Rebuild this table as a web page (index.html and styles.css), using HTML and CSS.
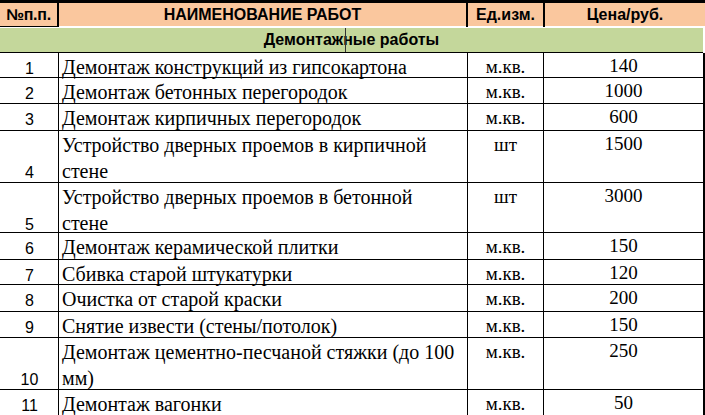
FILE: index.html
```html
<!DOCTYPE html>
<html lang="ru">
<head>
<meta charset="utf-8">
<title>Демонтажные работы</title>
<link rel="stylesheet" href="styles.css">
</head>
<body>
<div class="sheet">
  <div class="head">
    <div class="hc hc-num">№п.п.</div>
    <div class="hc">НАИМЕНОВАНИЕ РАБОТ</div>
    <div class="hc">Ед.изм.</div>
    <div class="hc hc-last">Цена/руб.</div>
  </div>
  <div class="section">Демонтажные работы<span class="cursor"></span></div>
  <div class="rows">
    <div class="row h25"><div class="c num">1</div><div class="c name">Демонтаж конструкций из гипсокартона</div><div class="c unit">м.кв.</div><div class="c price">140</div></div>
    <div class="row h26"><div class="c num">2</div><div class="c name">Демонтаж бетонных перегородок</div><div class="c unit">м.кв.</div><div class="c price">1000</div></div>
    <div class="row h27"><div class="c num">3</div><div class="c name">Демонтаж кирпичных перегородок</div><div class="c unit">м.кв.</div><div class="c price">600</div></div>
    <div class="row h52"><div class="c num">4</div><div class="c name">Устройство дверных проемов в кирпичной стене</div><div class="c unit">шт</div><div class="c price">1500</div></div>
    <div class="row h50"><div class="c num">5</div><div class="c name">Устройство дверных проемов в бетонной стене</div><div class="c unit">шт</div><div class="c price">3000</div></div>
    <div class="row h27"><div class="c num">6</div><div class="c name">Демонтаж керамической плитки</div><div class="c unit">м.кв.</div><div class="c price">150</div></div>
    <div class="row h25"><div class="c num">7</div><div class="c name">Сбивка старой штукатурки</div><div class="c unit">м.кв.</div><div class="c price">120</div></div>
    <div class="row h27"><div class="c num">8</div><div class="c name">Очистка от старой краски</div><div class="c unit">м.кв.</div><div class="c price">200</div></div>
    <div class="row h26"><div class="c num">9</div><div class="c name">Снятие извести (стены/потолок)</div><div class="c unit">м.кв.</div><div class="c price">150</div></div>
    <div class="row h52"><div class="c num">10</div><div class="c name">Демонтаж цементно-песчаной стяжки (до 100 мм)</div><div class="c unit">м.кв.</div><div class="c price">250</div></div>
    <div class="row h26"><div class="c num">11</div><div class="c name">Демонтаж вагонки</div><div class="c unit">м.кв.</div><div class="c price">50</div></div>
  </div>
</div>
</body>
</html>
```
FILE: styles.css
```css
* { box-sizing: border-box; }
html, body { margin: 0; padding: 0; background: #fff; }
body { overflow: hidden; }
.sheet { width: 705px; }
.head {
  display: grid;
  grid-template-columns: 59px 409px 77px 160px;
  background: #fac79e;
  border-top: 3px solid #000;
  height: 26px;
}
.hc {
  font-family: "Liberation Sans", Arial, sans-serif;
  font-weight: bold;
  font-size: 16px;
  color: #000;
  text-align: center;
  line-height: 23px;
  border-right: 2px solid #000;
  white-space: nowrap;
}
.hc-num { border-bottom: 1px solid #000; letter-spacing: -0.3px; }
.hc-last { border-right: none; }
.section {
  margin-top: 2px;
  height: 25px;
  background: #c4d79b;
  border-bottom: 1px solid #000;
  font-family: "Liberation Sans", Arial, sans-serif;
  font-weight: bold;
  font-size: 16px;
  text-align: center;
  line-height: 24px;
  position: relative;
  width: 703px;
}
.cursor {
  position: absolute;
  left: 345px;
  top: 0;
  width: 1px;
  height: 24px;
  background: #333;
}
.rows { border-right: 2px solid #000; width: 705px; }
.row {
  display: grid;
  grid-template-columns: 59px 409px 76px 159px;
  height: 26px;
  border-bottom: 1px solid #000;
}
.row.h25 { height: 25px; }
.row.h26 { height: 26px; }
.row.h27 { height: 27px; }
.row.h50 { height: 50px; }
.row.h52 { height: 52px; }
.c { border-right: 1px solid #000; color: #000; }
.c:last-child { border-right: none; }
.num {
  font-family: "Liberation Sans", Arial, sans-serif;
  font-size: 16px;
  display: flex;
  align-items: flex-end;
  justify-content: center;
  padding-bottom: 2px;
  padding-left: 1px;
}
.name {
  font-family: "Liberation Serif", "Times New Roman", serif;
  font-size: 20px;
  line-height: 26px;
  padding-left: 3px;
  padding-right: 5px;
  padding-top: 1px;
}
.unit {
  font-family: "Liberation Serif", "Times New Roman", serif;
  font-size: 19px;
  text-align: center;
  line-height: 26px;
  padding-top: 1px;
}
.price {
  font-family: "Liberation Serif", "Times New Roman", serif;
  font-size: 19px;
  text-align: center;
  line-height: 26px;
  padding-top: 0;
}
```
